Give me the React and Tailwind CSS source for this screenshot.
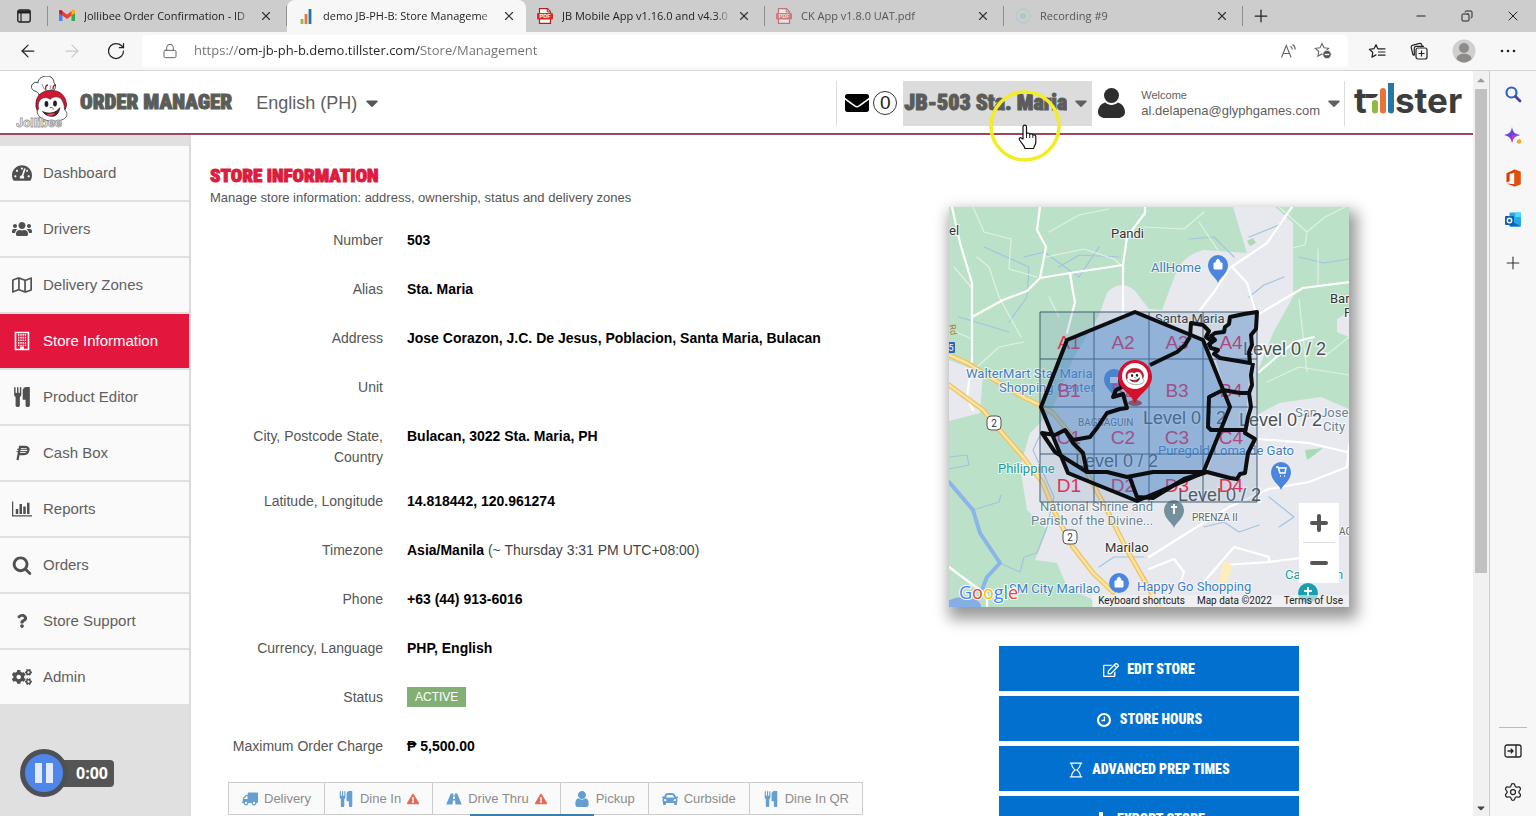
import {
  FaCar,
  FaCaretDown,
  FaCaretUp,
  FaCogs,
  FaDownload,
  FaEnvelope,
  FaExclamationTriangle,
  FaQuestion,
  FaRegEdit,
  FaRegMap,
  FaTachometerAlt,
  FaTruck,
  FaUsers,
} from 'react-icons/fa';
import { ArrowLeft, ArrowRight, Copy, Lock, Minus, Plus, RotateCw, Settings, X } from 'lucide-react';

/* ---------- Icons ---------- */

const CutleryIcon = ({ className }) => (
  <svg viewBox="0 0 1792 1792" fill="currentColor" className={className}>
    <path d="M832 64v640q0 61-35.5 111t-92.5 70v779q0 52-38 90t-90 38h-128q-52 0-90-38t-38-90v-779q-57-20-92.5-70t-35.5-111v-640q0-26 19-45t45-19 45 19 19 45v416q0 26 19 45t45 19 45-19 19-45v-416q0-26 19-45t45-19 45 19 19 45v416q0 26 19 45t45 19 45-19 19-45v-416q0-26 19-45t45-19 45 19 19 45zm768 0v1600q0 52-38 90t-90 38h-128q-52 0-90-38t-38-90v-512h-224q-13 0-22.5-9.5t-9.5-22.5v-800q0-132 94-226t226-94h256q26 0 45 19t19 45z" />
  </svg>
);

const ChartIcon = ({ className }) => (
  <svg viewBox="0 0 2048 1792" fill="currentColor" className={className}>
    <path d="M640 896v512h-256v-512h256zm384-512v1024h-256v-1024h256zm1024 1152v128h-2048v-1536h128v1408h1920zm-640-896v768h-256v-768h256zm384-384v1152h-256v-1152h256z" />
  </svg>
);

const SearchIcon = ({ className }) => (
  <svg viewBox="0 0 1792 1792" fill="currentColor" className={className}>
    <path d="M1216 832q0-185-131.5-316.5t-316.5-131.5-316.5 131.5-131.5 316.5 131.5 316.5 316.5 131.5 316.5-131.5 131.5-316.5zm512 832q0 52-38 90t-90 38q-54 0-90-38l-343-342q-179 124-399 124-143 0-273.5-55.5t-225-150-150-225-55.5-273.5 55.5-273.5 150-225 225-150 273.5-55.5 273.5 55.5 225 150 150 225 55.5 273.5q0 220-124 399l343 343q37 37 37 90z" />
  </svg>
);

const UserIcon = ({ className }) => (
  <svg viewBox="256 128 1280 1536" fill="currentColor" className={className}>
    <path d="M1536 1399q0 109-62.5 187t-150.5 78h-854q-88 0-150.5-78t-62.5-187q0-85 8.5-160.5t31.5-152 58.5-131 94-89 134.5-34.5q131 128 313 128t313-128q76 0 134.5 34.5t94 89 58.5 131 31.5 152 8.5 160.5zm-256-887q0 159-112.5 271.5t-271.5 112.5-271.5-112.5-112.5-271.5 112.5-271.5 271.5-112.5 271.5 112.5 112.5 271.5z" />
  </svg>
);

const AccountIcon = ({ className }) => (
  <svg viewBox="0 0 27 30" fill="currentColor" className={className}>
    <circle cx="13.500" cy="7.500" r="7.500" />
    <path d="M7 14.500c4 3.200 9 3.200 13 0 4.500 1.500 7 5.500 7 9.500 0 3.500-3 6-7 6H7c-4 0-7-2.500-7-6 0-4 2.500-8 7-9.500z" />
  </svg>
);

const ClockIcon = ({ className }) => (
  <svg viewBox="0 0 16 16" fill="none" stroke="currentColor" className={className}>
    <circle cx="8" cy="8" r="6" strokeWidth="2.200" />
    <path d="M8.400 4.500v4H5.500" strokeWidth="1.300" />
  </svg>
);

const BuildingIcon = ({ className }) => (
  <svg viewBox="0 0 20 20" className={className}>
    <path d="M3.500 1.500h13v17h-13z" fill="none" stroke="currentColor" strokeWidth="1.600" />
    <path d="M6.700 3v12M9 3v12M11.200 3v12M13.400 3v12" stroke="currentColor" strokeWidth="1.300" strokeDasharray="1.700 1" />
    <path d="M8 15.500h4V19H8z" fill="currentColor" />
  </svg>
);

const PesoIcon = ({ className }) => (
  <svg viewBox="0 0 20 20" fill="none" stroke="currentColor" className={className}>
    <path d="M5.500 17 8 3.800h4.500c3.200 0 4.300 1.600 3.800 3.700-.5 2.300-2.200 3.700-5 3.700H7" strokeWidth="2.200" />
    <path d="M5 6.300h12.500M4.500 8.600h12.500" strokeWidth="1" />
  </svg>
);

const RoadIcon = ({ className }) => (
  <svg viewBox="0 0 20 16" fill="currentColor" className={className}>
    <path d="M6 1h3.200L9 3.500h2L10.800 1H14l5.500 13.300c.2.500 0 .700-.5.700h-7.200l-.4-5H8.600l-.4 5H1c-.5 0-.7-.2-.5-.7zM8.900 5l-.2 3h2.600l-.2-3z" />
  </svg>
);

const HourglassIcon = ({ className }) => (
  <svg viewBox="0 0 16 18" fill="none" stroke="currentColor" strokeWidth="1.300" className={className}>
    <path d="M1 1.200h14M1 16.800h14M3 1.500c0 4 2 6 4 7.500-2 1.500-4 3.500-4 7.500M13 1.500c0 4-2 6-4 7.500 2 1.500 4 3.500 4 7.500" />
  </svg>
);

const PdfIcon = ({ className }) => (
  <svg viewBox="0 0 16 16" className={className}>
    <path d="M2.500.7h8l3 3v11.600h-11z" fill="#fff" stroke="#b3201d" strokeWidth="1.200" />
    <path d="M10.300.7v3.200h3.200" fill="none" stroke="#b3201d" />
    <rect y="5" width="16" height="6.500" rx="1" fill="#e0262b" />
    <text x="8" y="10.200" textAnchor="middle" fontSize="5.500" fontWeight="700" fontFamily="Liberation Sans, sans-serif" fill="#fff">PDF</text>
  </svg>
);

const GmailIcon = ({ className }) => (
  <svg viewBox="0 0 16 12" className={className}>
    <path d="M0 1.500V11h3.500V4z" fill="#4285f4" />
    <path d="M16 1.500V11h-3.500V4z" fill="#34a853" />
    <path d="M0 3V1.600C0 .2 1.600-.4 2.600.4L8 4.500 13.400.4C14.500-.4 16 .2 16 1.600V3L8 9z" fill="#ea4335" />
    <path d="M12.500 1.100V5.600L16 3V1.600C16 .2 14.500-.4 13.400.4z" fill="#fbbc04" />
    <path d="M3.500 1.100V5.600L0 3V1.600C0 .2 1.500-.4 2.600.4z" fill="#c5221f" />
  </svg>
);

const BarsIcon = ({ className }) => (
  <svg viewBox="0 0 12 16" strokeWidth="2.800" className={className}>
    <path d="M2 11v5" stroke="#93b846" />
    <path d="M6 6v10" stroke="#e8743b" />
    <path d="M10 1v15" stroke="#1f77ac" />
  </svg>
);

const RecordIcon = ({ className }) => (
  <svg viewBox="0 0 16 16" className={className}>
    <circle cx="8" cy="8" r="7" fill="none" stroke="#8cc3cc" />
    <circle cx="8" cy="8" r="3" fill="#8cc3cc" />
  </svg>
);

const TabActionsIcon = ({ className }) => (
  <svg viewBox="0 0 14 14" fill="none" stroke="#222" className={className}>
    <rect x=".8" y="1" width="12.400" height="12" rx="2" strokeWidth="1.400" />
    <path d="M1 3h12" strokeWidth="3" />
    <path d="M4 4v9" strokeWidth="1.200" />
  </svg>
);

const STAR = 'M8 1.500l2 4.200 4.600.600-3.400 3.200.900 4.600L8 11.900l-4.100 2.200.900-4.600L1.400 6.300 6 5.700z';

const AddFavoriteIcon = ({ className }) => (
  <svg viewBox="0 0 18 18" fill="none" stroke="#666" strokeWidth="1.100" className={className}>
    <path d={STAR} />
    <circle cx="13" cy="12.500" r="4.200" fill="#555" stroke="#fff" strokeWidth=".8" />
    <path d="M10.800 12.500h4.400" stroke="#fff" strokeWidth="1.300" />
  </svg>
);

const FavoritesIcon = ({ className }) => (
  <svg viewBox="0 0 18 16" fill="none" stroke="#222" strokeWidth="1.200" strokeLinejoin="round" strokeLinecap="round" className={className}>
    <path d="M10.500 5.800 9.800 5.700 8 1.700 6 5.700l-4.600.6 3.400 3.200-.9 4.600L8 11.900" />
    <path d="M11 5.800h6M10.500 9h6.500M10.500 12.200H17" />
  </svg>
);

const CollectionsIcon = ({ className }) => (
  <svg viewBox="0 0 18 18" fill="none" stroke="#222" strokeWidth="1.200" className={className}>
    <rect x="6" y="6" width="11" height="11" rx="2" />
    <path d="M11.500 8.500v6M8.500 11.500h6" />
    <path d="M4.300 13.500 2.900 12.600 1.200 5.500c-.2-1 .3-1.800 1.200-2.100l7.200-2c1-.2 1.900.3 2.100 1.200l.4 1.600M4.300 13.500V6.300c0-1.200.8-2 2-2H14" />
  </svg>
);

const ReadAloudIcon = ({ className }) => (
  <svg viewBox="0 0 18 16" fill="none" stroke="#666" strokeWidth="1.100" className={className}>
    <path d="M1.500 14.500 6.300 2.500l4.800 12M3.200 10.500h6.200" />
    <path d="M10.500 3.200c1.200.8 1.800 2 1.800 3.400M12.500 1.500c1.900 1.200 2.800 3 2.800 5" />
  </svg>
);

const SparkleIcon = ({ className }) => (
  <svg viewBox="0 0 18 18" className={className}>
    <path d="M8 0c1 5.500 3 7 8 8-5 1-7 3-8 8-1-5-3-7-8-8 5-1 7-2.500 8-8z" fill="#6b46d6" />
    <path d="M8 8h8c-5 1-7 3-8 8z" fill="#c23bd0" />
    <circle cx="15" cy="14.500" r="2.300" fill="#f4a52a" />
  </svg>
);

const OfficeIcon = ({ className }) => (
  <svg viewBox="0 0 18 18" className={className}>
    <path d="M10.500.5 16.500 2.800v12.400l-6 2.300L2.500 14.400l8 .9V3.500L5.600 4.900v7.300L2.500 13.600V4.200z" fill="#d83b01" />
    <path d="M10.500.5 16.500 2.800v12.400l-6 2.300z" fill="#e0500a" />
  </svg>
);

const OutlookIcon = ({ className }) => (
  <svg viewBox="0 0 18 18" className={className}>
    <rect x="5.500" y="1.500" width="11.500" height="14" rx="1" fill="#28a8ea" />
    <path d="M5.500 9 17 15.500H6.500a1 1 0 0 1-1-1z" fill="#0f6cbd" />
    <path d="M11.200 1.500H17v4.600h-5.800z" fill="#50d9ff" />
    <rect x="1" y="5" width="9" height="9" rx="1" fill="#0f5fb0" />
    <circle cx="5.500" cy="9.500" r="2.200" fill="none" stroke="#fff" strokeWidth="1.400" />
  </svg>
);

const SidebarSearchIcon = ({ className }) => (
  <svg viewBox="0 0 18 18" fill="none" className={className}>
    <circle cx="7.500" cy="7.500" r="5" stroke="#2d62c4" strokeWidth="2.200" />
    <path d="M11.500 11.500 16 16" stroke="#4a3fa8" strokeWidth="2.800" strokeLinecap="round" />
  </svg>
);

const PanelIcon = ({ className }) => (
  <svg viewBox="0 0 18 14" fill="none" stroke="#222" strokeWidth="1.300" className={className}>
    <rect x="1" y="1" width="16" height="12" rx="2" />
    <path d="M12 1v12M3.500 7H9M6.800 4.700 9 7 6.800 9.300" />
  </svg>
);

const JollibeeFace = (props) => (
  <g {...props}>
    <path d="M0 24C-1 11 8 6 17 7c9 0 14 6 15 14 0 3-1 5-2 7L2 30z" fill="#d8152f" stroke="#7d0f1e" />
    <path d="M3 19c2-5 8-6 12-3 4-4 11-3 13 2 2 4 2 7 2 9 4 3 3 8-1 10-6 3-18 3-23-1-5-3-6-8-3-10-1-2-1-4 0-7z" fill="#fff" stroke="#333" strokeWidth=".8" />
    <ellipse cx="11" cy="21" rx="2" ry="3.200" fill="#222" />
    <ellipse cx="20" cy="20.500" rx="2" ry="3.200" fill="#222" />
    <path d="M7 29c6 3 14 2 18-4-.5 5-4 9.500-9 9-4-.4-7-2-9-5z" fill="#7d0f1e" stroke="#222" strokeWidth=".9" />
    <path d="M11 32c3-1 6-1.500 9-1-2 3-6 3-9 1z" fill="#e8465a" />
    <path d="M14.500 25c2-1 4 0 3.500 2" fill="none" stroke="#333" strokeWidth=".8" />
  </g>
);

const JollibeeLogo = () => (
  <svg viewBox="0 0 56 54" role="img" aria-label="Jollibee" className="h-[54px] w-14 shrink-0">
    <JollibeeFace transform="translate(20 8) scale(.95)" />
    <path d="M23 19c-1-3-2-3-4-4-4-1-5-6-1-8 1-1 3-1 4 0 0-5 5-7 9-7s7 3 7 7c2 2 2 5 0 7-5 0-11 1-15 5z" fill="#fff" stroke="#444" />
    <path d="M26 8c1 3 2 5 4 7M35 9l-1 4" fill="none" stroke="#777" strokeWidth=".8" />
    <path d="M30 14c-1-3 0-5 2-5M37 13c0-3 1-4 3-4" fill="none" stroke="#a31324" strokeWidth="1.300" />
    <text x="0" y="51" fontSize="12" fontWeight="700" fontFamily="Inter, sans-serif" fill="#fff" stroke="#999" strokeWidth=".8">Jollibee</text>
  </svg>
);

const TillsterLogo = () => (
  <svg viewBox="0 0 112 40" role="img" aria-label="tillster" className="h-10 w-28 shrink-0">
    <g fontFamily="Inter, sans-serif" fontSize="35" fontWeight="700" fill="#3d3d3d">
      <text x="1" y="30">t</text>
      <text x="42" y="30">ster</text>
    </g>
    <path d="M13 11h12c-1 3-3 4-6 4h-6z" fill="#3d3d3d" />
    <g strokeWidth="6" strokeLinecap="round">
      <path d="M22 20v7.500" stroke="#93b846" />
      <path d="M30 8v19.500" stroke="#e8743b" />
      <path d="M38 0v27.500" stroke="#2577a8" />
    </g>
  </svg>
);

/* ---------- Browser chrome ---------- */

const browserTabs = [
  { title: 'Jollibee Order Confirmation - ID', icon: GmailIcon },
  { title: 'demo JB-PH-B: Store Manageme', icon: BarsIcon, active: true },
  { title: 'JB Mobile App v1.16.0 and v4.3.0', icon: PdfIcon },
  { title: 'CK App v1.8.0 UAT.pdf', icon: PdfIcon, faded: true },
  { title: 'Recording #9', icon: RecordIcon, faded: true },
];

function TabBar() {
  return (
    <div className="flex h-8 shrink-0 items-stretch bg-[#cdcdcd]">
      <div className="flex w-12 items-center justify-end gap-4">
        <button aria-label="Tab actions"><TabActionsIcon className="h-3.5 w-3.5" /></button>
        <span className="h-5 w-px bg-[#8f8f8f]" />
      </div>
      {browserTabs.map(({ title, icon: Icon, active, faded }) => (
        <div
          key={title}
          className={`flex w-[239px] min-w-0 items-center gap-[9px] pl-[11px] pr-1.5 ${
            active ? 'rounded-t-lg bg-[#f7f7f7]' : ''
          }`}
        >
          <Icon className={`h-4 w-4 shrink-0 ${faded ? 'opacity-50' : ''}`} />
          <span
            className={`min-w-0 flex-1 overflow-hidden whitespace-nowrap text-[11px] mask-r-from-90% ${
              faded ? 'text-[#555]' : 'text-[#222]'
            }`}
          >
            {title}
          </span>
          <button aria-label={`Close ${title}`} className="-ml-2 p-1 text-[#333]">
            <X className="h-3.5 w-3.5" />
          </button>
          {!active && <span className="-mr-1.5 h-5 w-px bg-[#8f8f8f]" />}
        </div>
      ))}
      <button aria-label="New tab" className="flex w-9 items-center justify-center text-[#222]">
        <Plus className="h-5 w-5" strokeWidth={1.5} />
      </button>
      <div className="ml-auto flex text-[#222]">
        <button aria-label="Minimize" className="flex w-[46px] items-center justify-center">
          <Minus className="h-3.5 w-3.5" strokeWidth={2} />
        </button>
        <button aria-label="Restore" className="flex w-[46px] items-center justify-center">
          <Copy className="h-3 w-3 -scale-x-100" strokeWidth={2} />
        </button>
        <button aria-label="Close window" className="flex w-[46px] items-center justify-center">
          <X className="h-4 w-4" strokeWidth={1.5} />
        </button>
      </div>
    </div>
  );
}

function AddressBar() {
  return (
    <div className="flex h-[39px] shrink-0 items-center border-b border-[#d4d4d4] bg-[#f7f7f7] text-[#222]">
      <button aria-label="Back" className="ml-[18px] mr-6"><ArrowLeft className="h-5 w-5" strokeWidth={1.5} /></button>
      <button aria-label="Forward" className="mr-6 text-[#c9c9c9]" disabled><ArrowRight className="h-5 w-5" strokeWidth={1.5} /></button>
      <button aria-label="Refresh" className="mr-4"><RotateCw className="h-5 w-5" strokeWidth={1.5} /></button>
      <div className="flex h-8 min-w-0 flex-1 items-center rounded bg-white px-4">
        <Lock className="ml-1 mr-4 h-4 w-4 shrink-0 text-[#666]" strokeWidth={1.5} />
        <input
          aria-label="Address"
          defaultValue="https://om-jb-ph-b.demo.tillster.com/Store/Management"
          className="min-w-0 flex-1 bg-[linear-gradient(to_right,#707070_44px,#222_44px,#222_227px,#707070_227px)] bg-clip-text text-[13px] text-transparent outline-none"
        />
        <button aria-label="Read aloud" className="mx-4"><ReadAloudIcon className="h-4 w-[18px]" /></button>
        <button aria-label="Add to favorites"><AddFavoriteIcon className="h-[18px] w-[18px]" /></button>
      </div>
      <button aria-label="Favorites" className="ml-5 mr-6"><FavoritesIcon className="h-4 w-[18px]" /></button>
      <button aria-label="Collections" className="mr-6"><CollectionsIcon className="h-[18px] w-[18px]" /></button>
      <button aria-label="Profile" className="mr-6">
        <svg viewBox="0 0 24 24" className="h-6 w-6">
          <circle cx="12" cy="12" r="11.500" fill="#d0cfce" />
          <circle cx="12" cy="9" r="5" fill="#8d8b89" />
          <path d="M4.500 20c0-7 15-7 15 0-4 4.500-11 4.500-15 0z" fill="#8d8b89" />
        </svg>
      </button>
      <button aria-label="Settings and more" className="mr-5">
        <svg viewBox="0 0 16 4" className="h-1 w-4" fill="#222">
          <circle cx="2" cy="2" r="1.300" /><circle cx="8" cy="2" r="1.300" /><circle cx="14" cy="2" r="1.300" />
        </svg>
      </button>
    </div>
  );
}

function EdgeSidebar() {
  return (
    <aside className="flex w-[47px] shrink-0 flex-col items-center border-l border-[#cfcfcf] bg-[#f7f7f7] pb-3.5 pt-3.5">
      <div className="flex flex-col items-center gap-6">
        <button aria-label="Search"><SidebarSearchIcon className="h-[18px] w-[18px]" /></button>
        <button aria-label="Discover"><SparkleIcon className="h-[18px] w-[18px]" /></button>
        <button aria-label="Office"><OfficeIcon className="h-[18px] w-[18px]" /></button>
        <button aria-label="Outlook"><OutlookIcon className="h-[18px] w-[18px]" /></button>
        <button aria-label="Customize" className="text-[#333]"><Plus className="h-5 w-5" strokeWidth={1.3} /></button>
      </div>
      <div className="mt-auto flex flex-col items-center gap-6 border-t border-[#bbb] px-1 pt-4">
        <button aria-label="Hide sidebar"><PanelIcon className="h-3.5 w-[18px]" /></button>
        <button aria-label="Settings" className="text-[#222]"><Settings className="h-5 w-5" strokeWidth={1.5} /></button>
      </div>
    </aside>
  );
}

function Scrollbar() {
  return (
    <div aria-hidden="true" className="flex w-4 shrink-0 flex-col items-center bg-[#f1f1f1]">
      <FaCaretUp className="my-[3px] h-3 w-3 shrink-0 text-[#999]" />
      <div className="h-[65%] w-3 bg-[#c1c1c1]" />
      <FaCaretDown className="mb-0.5 mt-auto h-3 w-3 shrink-0 text-[#444]" />
    </div>
  );
}

/* ---------- Order manager ---------- */

function Header() {
  return (
    <header className="flex h-16 shrink-0 items-center border-b-2 border-[#9d4660] bg-white pt-0.5 text-[#606060]">
      <div className="ml-4"><JollibeeLogo /></div>
      <h1 className="ml-2 font-['Roboto_Condensed','Liberation_Sans_Narrow',sans-serif] text-[21px] font-black text-[#5a5c5a] [-webkit-text-stroke:1px_#5a5c5a]">
        ORDER MANAGER
      </h1>
      <label className="ml-6 flex items-center gap-1">
        <span className="sr-only">Language</span>
        <select className="appearance-none bg-transparent text-[18px] leading-6 outline-none">
          <option>English (PH)</option>
        </select>
        <FaCaretDown className="h-5 w-5 text-[#555]" />
      </label>
      <div className="ml-auto flex h-[45px] items-center border-l border-[#ddd] pl-2">
        <FaEnvelope className="h-6 w-6 text-black" />
        <span className="ml-1 flex h-6 w-6 items-center justify-center rounded-full border border-[#333] text-[19px] text-[#222]">0</span>
        <label className="ml-1.5 flex h-[45px] items-center gap-1 bg-[#dcdcdc] px-px">
          <span className="sr-only">Store</span>
          <select className="appearance-none bg-transparent font-['Roboto_Condensed','Liberation_Sans_Narrow',sans-serif] text-[22px] font-black leading-8 text-[#5a5c5a] outline-none [-webkit-text-stroke:1px_#5a5c5a]">
            <option>JB-503 Sta. Maria</option>
          </select>
          <FaCaretDown className="h-5 w-5" />
        </label>
        <button className="flex h-[45px] items-center border-r border-[#ddd] pl-1.5 text-left">
          <AccountIcon className="h-[30px] w-[27px] text-[#2e2e2e]" />
          <span className="ml-4 flex flex-col">
            <span className="text-[11px] leading-4">Welcome</span>
            <span className="text-[13px] leading-4">al.delapena@glyphgames.com</span>
          </span>
          <FaCaretDown className="ml-1 h-5 w-5" />
        </button>
        <div className="ml-2 mr-2"><TillsterLogo /></div>
      </div>
    </header>
  );
}

const navItems = [
  { label: 'Dashboard', icon: FaTachometerAlt },
  { label: 'Drivers', icon: FaUsers },
  { label: 'Delivery Zones', icon: FaRegMap },
  { label: 'Store Information', icon: BuildingIcon, active: true },
  { label: 'Product Editor', icon: CutleryIcon },
  { label: 'Cash Box', icon: PesoIcon },
  { label: 'Reports', icon: ChartIcon },
  { label: 'Orders', icon: SearchIcon },
  { label: 'Store Support', icon: FaQuestion, small: true },
  { label: 'Admin', icon: FaCogs },
];

function Sidebar() {
  return (
    <nav className="w-[191px] shrink-0 border-r-2 border-[#dcdcdc] bg-[#e0e0e0] pt-[11px]">
      <ul>
        {navItems.map(({ label, icon: Icon, active, small }) => (
          <li key={label} className="border-b-2 border-[#e0e0e0]">
            <a
              href="#"
              className={`flex h-[54px] items-center gap-[11px] pl-3 text-[15px] ${
                active ? 'bg-[#e3173e] text-white' : 'bg-[#fafafa] text-[#5f5f5f]'
              }`}
            >
              <span className={`flex w-5 justify-center ${active ? 'text-white' : 'text-[#505050]'}`}>
                <Icon className={small ? 'h-3.5 w-3.5' : 'h-5 w-5'} />
              </span>
              {label}
            </a>
          </li>
        ))}
      </ul>
    </nav>
  );
}

const storeFields = [
  ['Number', '503'],
  ['Alias', 'Sta. Maria'],
  ['Address', 'Jose Corazon, J.C. De Jesus, Poblacion, Santa Maria, Bulacan'],
  ['Unit', ''],
  ['City, Postcode State, Country', 'Bulacan, 3022 Sta. Maria, PH'],
  ['Latitude, Longitude', '14.818442, 120.961274'],
  ['Timezone', 'Asia/Manila', '(~ Thursday 3:31 PM UTC+08:00)'],
  ['Phone', '+63 (44) 913-6016'],
  ['Currency, Language', 'PHP, English'],
  ['Status', 'ACTIVE'],
  ['Maximum Order Charge', '₱ 5,500.00'],
];

const orderModes = [
  { label: 'Delivery', icon: FaTruck, flip: true },
  { label: 'Dine In', icon: CutleryIcon, warn: true },
  { label: 'Drive Thru', icon: RoadIcon, warn: true },
  { label: 'Pickup', icon: UserIcon },
  { label: 'Curbside', icon: FaCar },
  { label: 'Dine In QR', icon: CutleryIcon },
];

function StoreDetails() {
  return (
    <section className="min-w-0 flex-1">
      <h2 className="font-['Roboto_Condensed','Liberation_Sans_Narrow',sans-serif] text-[19px] font-black leading-6 text-[#dc1c3f] [-webkit-text-stroke:1px_#dc1c3f]">
        STORE INFORMATION
      </h2>
      <p className="text-[13px] leading-5 text-[#555]">
        Manage store information: address, ownership, status and delivery zones
      </p>
      <dl className="mt-[22px] text-[14px] leading-[21px]">
        {storeFields.map(([label, value, note]) => (
          <div key={label} className="flex min-h-[49px] gap-6 pb-[23px] last:min-h-[46px]">
            <dt className="w-[173px] shrink-0 text-right text-[#555]">{label}</dt>
            <dd className="text-[#444]">
              {label === 'Status' ? (
                <span className="block bg-[#82b074] px-2 text-[12px] leading-5 text-white">{value}</span>
              ) : (
                <b className="text-black">{value}</b>
              )}
              {note && ` ${note}`}
            </dd>
          </div>
        ))}
      </dl>
      <div role="tablist" className="ml-[18px] flex w-fit divide-x divide-[#ccc] border border-[#ccc] bg-[#fafafa]">
        {orderModes.map(({ label, icon: Icon, warn, flip }) => (
          <button key={label} role="tab" className="flex h-[31px] items-center gap-1.5 px-[13px] pt-px text-[13px] text-[#8c8c8c]">
            <Icon className={`h-4 w-4 text-[#659fd1] ${flip ? '-scale-x-100' : ''}`} />
            {label}
            {warn && <FaExclamationTriangle className="h-3 w-3 text-[#e5695c]" />}
          </button>
        ))}
      </div>
      <div className="-mt-px ml-[260px] h-10 w-[124px] bg-[#3d7eae]" />
    </section>
  );
}

/* ---------- Map ---------- */

const whiteRoads = [
  'M3 0 11 36 23 76 23 110 23 153 18 190 24 203',
  'M23 110 54 93 78 84 91 71 121 66 174 58 178 30 196 6V0',
  'M91 0 88 23 97 40 91 71',
  'M121 66 124 85 126 95 118 126',
  'M174 58V110',
  'M343 0 318 36 281 61 265 85 251 103 M284 61 298 76 306 103',
  'M308 108 354 81 401 75 M310 165 345 135 365 130',
  'M400 238 398 260 360 275 320 282 280 300 235 328 200 350',
  'M310 232 360 236 398 245 M255 375 285 340 320 350 320 355 275 358 M320 355 360 350',
  'M200 362 225 352 235 365 230 380 M0 360 20 375 38 388 38 400',
];

const thinRoads = [
  'M24 0 35 25 62 32 60 62 88 70 M100 25 130 8 160 2 M97 50 135 42 165 52 174 60',
  'M28 50 40 60 50 90 72 130 M28 160 50 140 75 135 M100 90 110 110 M5 60 22 80 M0 122 23 132',
  'M330 0 358 25 356 38 330 44 M358 25 376 10 396 0 M369 42 369 78 M350 92 358 165 M318 175 350 160 400 168',
  'M195 20 235 22 255 5 M250 15 270 45 M375 150 400 130',
];

const streams = [
  'M35 40 80 60 78 90 60 115 M75 50 95 45 130 70 150 40 M110 60 130 48 170 50 M10 110 60 125',
  'M240 32 265 30 285 50 M300 30 330 18 M350 50 375 56 400 52 M300 90 315 78 335 70',
  'M0 262 20 258 18 248 0 250 M24 303 50 295 52 288 M51 356 71 365 75 350 88 346 98 320 105 290 84 243 90 230',
  'M320 290 345 310 330 320 M255 320 275 315 290 325 310 318 M150 360 165 350 195 350',
];

// Borders of the delivery zones
const zones = [
  'M186 105 118 133 92 200 119 266 188 294 254 266 281 200 254 133Z',
  'M308 105 295 107 281 110 280 117 276 120 275 125 266 126 262 129 266 133 260 137 262 141 269 143 265 147 271 151 301 156 300 145 303 138 302 128 307 122Z',
  'M241 130 242 116 254 118 260 124 257 130 263 134 260 138',
  'M201 158 228 145 236 138 241 130',
  'M304 156 302 168 303 178 300 186 302 200 299 210 296 226 306 232 299 246 296 266 291 267 288 272 281 271 258 265 235 272 204 291 188 290 181 271',
  'M296 223H262L259 220 260 190 274 183 291 186H301',
  'M195 163 182 170 171 174 173 180 167 183 164 190 174 187 178 201 171 202 158 206 148 221 141 230 124 233 116 223 106 228 93 226 106 245 138 265 158 265 178 270 204 265 231 265 254 265',
  'M116 223 124 236 134 246 138 265',
];

const places = [
  [0, 28, 'el', 'town'],
  [162, 31, 'Pandi', 'town'],
  [202, 65, 'AllHome', 'poi'],
  [381, 96, 'Bar', 'town'],
  [395, 110, 'F', 'town'],
  [206, 116, 'Santa Maria', 'town'],
  [17, 171, 'WalterMart Sta. Maria', 'poi'],
  [50, 185, 'Shopping Center', 'poi'],
  [346, 210, 'San Jose', 'muted'],
  [374, 224, 'City', 'muted'],
  [209, 248, 'Puregold Loma de Gato', 'poi'],
  [49, 266, 'Philippine', 'teal'],
  [91, 304, 'National Shrine and', 'muted'],
  [82, 318, 'Parish of the Divine...', 'muted'],
  [156, 345, 'Marilao', 'town'],
  [60, 386, 'SM City Marilao', 'poi'],
  [188, 384, 'Happy Go Shopping', 'poi'],
  [336, 372, 'Ca', 'teal'],
  [387, 372, 'n', 'teal'],
];

const placeColors = { town: '#333', poi: '#3f7fc4', muted: '#6b8494', teal: '#1f9b9b' };

const levels = [[294, 148], [194, 217], [290, 219], [126, 260], [229, 294]];

const gridRows = ['A', 'B', 'C', 'D'];

const MapMarker = ({ x, y, color, children }) => (
  <g transform={`translate(${x} ${y})`}>
    <path d="M0 19c-2-6-10-9-10-18a10 10 0 0 1 20 0c0 9-8 12-10 18z" fill={color} />
    {children}
  </g>
);

function MapCanvas() {
  return (
    <svg viewBox="0 0 400 400" className="block h-full w-full" role="img" aria-label="Delivery zones map">
      <rect width="400" height="400" fill="#bbe2c8" />
      <g fill="#e8e9ee">
        <path d="M150 108 158 86C166 76 178 76 186 84L200 102 213 103 228 63C235 50 245 46 254 43L298 46 284 0H326L344 16V90L324 126 308 166V208L330 196 372 190 400 202V400H144V393L118 380 108 356 86 353 98 323 78 303 71 260 81 226 102 205 125 150Z" />
        <path d="M0 153 34 166 31 206 0 214ZM388 112 400 105V130L388 125Z" />
      </g>
      <path d="M298 34l6-3 3 5-6 3zM356 243l18-2-10 8-6 4z" fill="#a9d9b5" />
      <g fill="none" strokeLinejoin="round" strokeLinecap="round">
        {streams.map((d) => <path key={d} d={d} stroke="#a3c3e0" strokeWidth="1.200" />)}
        <path d="M0 275 24 303 31 326 51 356 38 370 32 385" stroke="#8bb4e8" strokeWidth="4" />
        {thinRoads.map((d) => <path key={d} d={d} stroke="#dff1e4" strokeWidth="1.200" />)}
        {whiteRoads.map((d) => <path key={d} d={d} stroke="#fff" strokeWidth="2.200" />)}
        {[
          'M0 148 18 156 44 172 74 190 91 198 104 206 124 230 138 266 158 303 178 343 198 378 210 400',
          'M0 178 34 203 48 220 74 250 94 276 106 306 124 340 144 366 164 385',
        ].map((d) => (
          <g key={d}>
            <path d={d} stroke="#efc25e" strokeWidth="5" />
            <path d={d} stroke="#fbe3a2" strokeWidth="2.500" />
          </g>
        ))}
      </g>
      <ellipse cx="14" cy="399" rx="18" ry="9" fill="#84aee6" />
      <path d="M274 355h7l2 8-8 17h-6z" fill="#fbeebb" />

      {/* Markers under the zones */}
      <MapMarker x={269} y={57} color="#4a86e0">
        <path d="M-4-1h8v6h-8zM-2-1c0-5 4-5 4 0" fill="#fff" stroke="#fff" />
      </MapMarker>
      <MapMarker x={165} y={171} color="#4a86e0">
        <path d="M-4-1h8v6h-8z" fill="#fff" />
      </MapMarker>
      <MapMarker x={332} y={264} color="#4a86e0">
        <path d="M-5-4h2l2 6h5l1-5h-7M-1 5h1M3 5h1" fill="none" stroke="#fff" strokeWidth="1.500" />
      </MapMarker>
      <MapMarker x={225} y={302} color="#74909c">
        <path d="M0-5v10M-3-2h6" stroke="#fff" strokeWidth="1.800" />
      </MapMarker>
      <circle cx="170" cy="376" r="10" fill="#4a86e0" />
      <path d="M166 374h8v6h-8zM168 374c0-5 4-5 4 0" fill="#fff" stroke="#fff" />
      <circle cx="359" cy="386" r="10" fill="#18a0ae" />
      <path d="M359 380v9M355 384h8" stroke="#fff" strokeWidth="1.800" />

      <g fontFamily="Roboto, sans-serif" fontSize="13" stroke="#fff" strokeOpacity=".7" strokeWidth="2" paintOrder="stroke">
        {places.map(([x, y, text, kind]) => (
          <text key={text} x={x} y={y} fill={placeColors[kind]}>{text}</text>
        ))}
        <g fontSize="10" fill="#5c6570">
          <text x="129" y="219">BAGBAGUIN</text>
          <text x="243" y="314">PRENZA II</text>
          <text x="390" y="328">AC</text>
        </g>
      </g>
      {[[45, 216], [121, 330]].map(([x, y]) => (
        <g key={x} transform={`translate(${x} ${y})`}>
          <rect x="-7" y="-7" width="14" height="14" rx="4" fill="#fff" stroke="#555" />
          <text y="4" fontSize="10" textAnchor="middle" fontFamily="Roboto, sans-serif" fill="#333">2</text>
        </g>
      ))}
      <rect x="-3" y="135" width="9" height="11" rx="1" fill="#2c63b8" />
      <text x="2" y="144" fontSize="9" textAnchor="middle" fontFamily="Roboto, sans-serif" fill="#fff">5</text>
      <text transform="translate(0 118) rotate(80)" fontSize="9" fontFamily="Roboto, sans-serif" fill="#a9762e">Rd</text>

      {/* Level labels */}
      <g fontFamily="Liberation Sans, Arial, sans-serif" fontSize="18" fill="#4a4f55" stroke="#fff" strokeOpacity=".7" strokeWidth="3" paintOrder="stroke">
        {levels.map(([x, y]) => <text key={`${x}-${y}`} x={x} y={y}>Level 0 / 2</text>)}
      </g>

      {/* Zone grid */}
      <rect x="91" y="105" width="217" height="190" fill="#6f93b8" fillOpacity=".2" />
      <path d="M91 105H308V295H91ZM145 105V295M200 105V295M254 105V295M91 152H308M91 200H308M91 247H308" fill="none" stroke="#3f5a70" strokeWidth="1" />
      <g fontFamily="Liberation Sans, Arial, sans-serif" fontSize="19" fill="#e0325a" textAnchor="middle">
        {gridRows.map((row, r) =>
          [1, 2, 3, 4].map((col) => (
            <text key={row + col} x={66 + col * 54} y={142 + r * 47.5}>{row + col}</text>
          ))
        )}
      </g>
      <path d={zones[0]} fill="#3f7fc9" fillOpacity=".42" />
      <path d="M308 105 281 110 276 120 266 126 261 136 269 143 266 150 272 170 281 200 258 265 281 271 296 266 306 232 296 226 301 156Z" fill="#3f7fc9" fillOpacity=".3" />
      <g fill="none" stroke="#0b0d10" strokeWidth="4" strokeLinejoin="round">
        {zones.map((d) => <path key={d} d={d} />)}
      </g>

      {/* Store pin */}
      <ellipse cx="186" cy="196" rx="7" ry="3" fill="#7a1a2a" fillOpacity=".6" />
      <path d="M186 197c-3-10-17-15-17-27a17 17 0 0 1 34 0c0 12-14 17-17 27z" fill="#d5122d" />
      <circle cx="186" cy="169" r="13" fill="#fff" />
      <JollibeeFace transform="translate(177 158) scale(.55 .5)" />

      <g fontFamily="Open Sans, sans-serif" fontSize="18" stroke="#fff" strokeWidth="2" paintOrder="stroke">
        <text x="10" y="392">
          <tspan fill="#4285f4">G</tspan>
          <tspan fill="#ea4335">o</tspan>
          <tspan fill="#fbbc04">o</tspan>
          <tspan fill="#4285f4">g</tspan>
          <tspan fill="#34a853">l</tspan>
          <tspan fill="#ea4335">e</tspan>
        </text>
      </g>
    </svg>
  );
}

function StoreMap() {
  return (
    <div className="relative h-[400px] w-full shadow-[4px_8px_14px_4px_rgba(0,0,0,0.4)]">
      <MapCanvas />
      <div className="absolute bottom-6 right-2.5 flex w-10 flex-col divide-y divide-[#ddd] bg-white px-1 text-[#555]">
        <button aria-label="Zoom in" className="flex h-10 items-center justify-center"><Plus className="h-6 w-6" strokeWidth={4} /></button>
        <button aria-label="Zoom out" className="flex h-10 items-center justify-center"><Minus className="h-6 w-6" strokeWidth={4} /></button>
      </div>
      <div className="absolute bottom-0 right-0 flex gap-3 bg-[#f5f5f5]/60 px-1.5 font-['Roboto',sans-serif] text-[10px] leading-3 text-[#222]">
        <button>Keyboard shortcuts</button>
        <span>Map data ©2022</span>
        <a href="#">Terms of Use</a>
      </div>
    </div>
  );
}

const actions = [
  { label: 'EDIT STORE', icon: FaRegEdit },
  { label: 'STORE HOURS', icon: ClockIcon },
  { label: 'ADVANCED PREP TIMES', icon: HourglassIcon },
  { label: 'EXPORT STORE', icon: FaDownload },
];

function StoreActions() {
  return (
    <div className="mt-[39px] flex w-[300px] flex-col gap-[5px]">
      {actions.map(({ label, icon: Icon }) => (
        <button
          key={label}
          className="flex h-[45px] items-center justify-center gap-2 bg-[#0270cf] pt-0.5 font-['Roboto_Condensed','Liberation_Sans_Narrow',sans-serif] text-[14px] font-black text-white"
        >
          <Icon className="h-4 w-4" />
          {label}
        </button>
      ))}
    </div>
  );
}

/* ---------- Screen recorder ---------- */

function Recorder() {
  return (
    <div className="absolute bottom-[19px] left-5 flex items-center">
      <button aria-label="Pause recording" className="z-10 flex h-12 w-12 items-center justify-center gap-1 rounded-full border-[5px] border-[#4d5156] bg-[#4f86ea]">
        <span className="h-5 w-[7px] bg-[#e3ebfa]" />
        <span className="h-5 w-[7px] bg-[#e3ebfa]" />
      </button>
      <span className="-ml-2 flex h-[27px] items-center rounded bg-[#555] pl-4 pr-1.5 text-[16px] font-bold text-white">0:00</span>
    </div>
  );
}

function Pointer() {
  return (
    <svg viewBox="0 0 72 72" aria-hidden="true" className="pointer-events-none absolute left-[989px] top-[90px] h-[72px] w-[72px]">
      <circle cx="36" cy="36" r="34" fill="none" stroke="#f4ed24" strokeWidth="3.500" />
      <path d="M34 37c0-2.500 3.500-2.500 3.500 0v7c.5-1.500 3-1.300 3.200.5.8-1.200 2.900-.8 3.100.8 1-1 3-.5 3 1.500v5.200c0 3-2 4-2.200 6.500h-8.500c-1-3.500-3.400-5-5.600-8.500-1-1.800.8-3 2.100-1.800L34 49z" fill="#fff" stroke="#111" strokeWidth="1.200" strokeLinejoin="round" />
      <path d="M37.500 44v4M40.700 45v3M43.800 46v2" stroke="#111" strokeWidth=".9" />
    </svg>
  );
}

export default function App() {
  return (
    <div className="relative flex h-screen flex-col overflow-hidden bg-white font-['Open_Sans',sans-serif]">
      <TabBar />
      <AddressBar />
      <div className="flex min-h-0 flex-1">
        <div className="flex min-w-0 flex-1 flex-col font-['Liberation_Sans',Arial,sans-serif]">
          <Header />
          <div className="flex min-h-0 flex-1">
            <Sidebar />
            <main className="flex min-w-0 flex-1 items-start overflow-hidden pl-[19px] pt-[29px]">
              <StoreDetails />
              <div className="mr-[124px] mt-[43px] flex w-[400px] shrink-0 flex-col items-center">
                <StoreMap />
                <StoreActions />
              </div>
            </main>
          </div>
        </div>
        <Scrollbar />
        <EdgeSidebar />
      </div>
      <Recorder />
      <Pointer />
    </div>
  );
}
